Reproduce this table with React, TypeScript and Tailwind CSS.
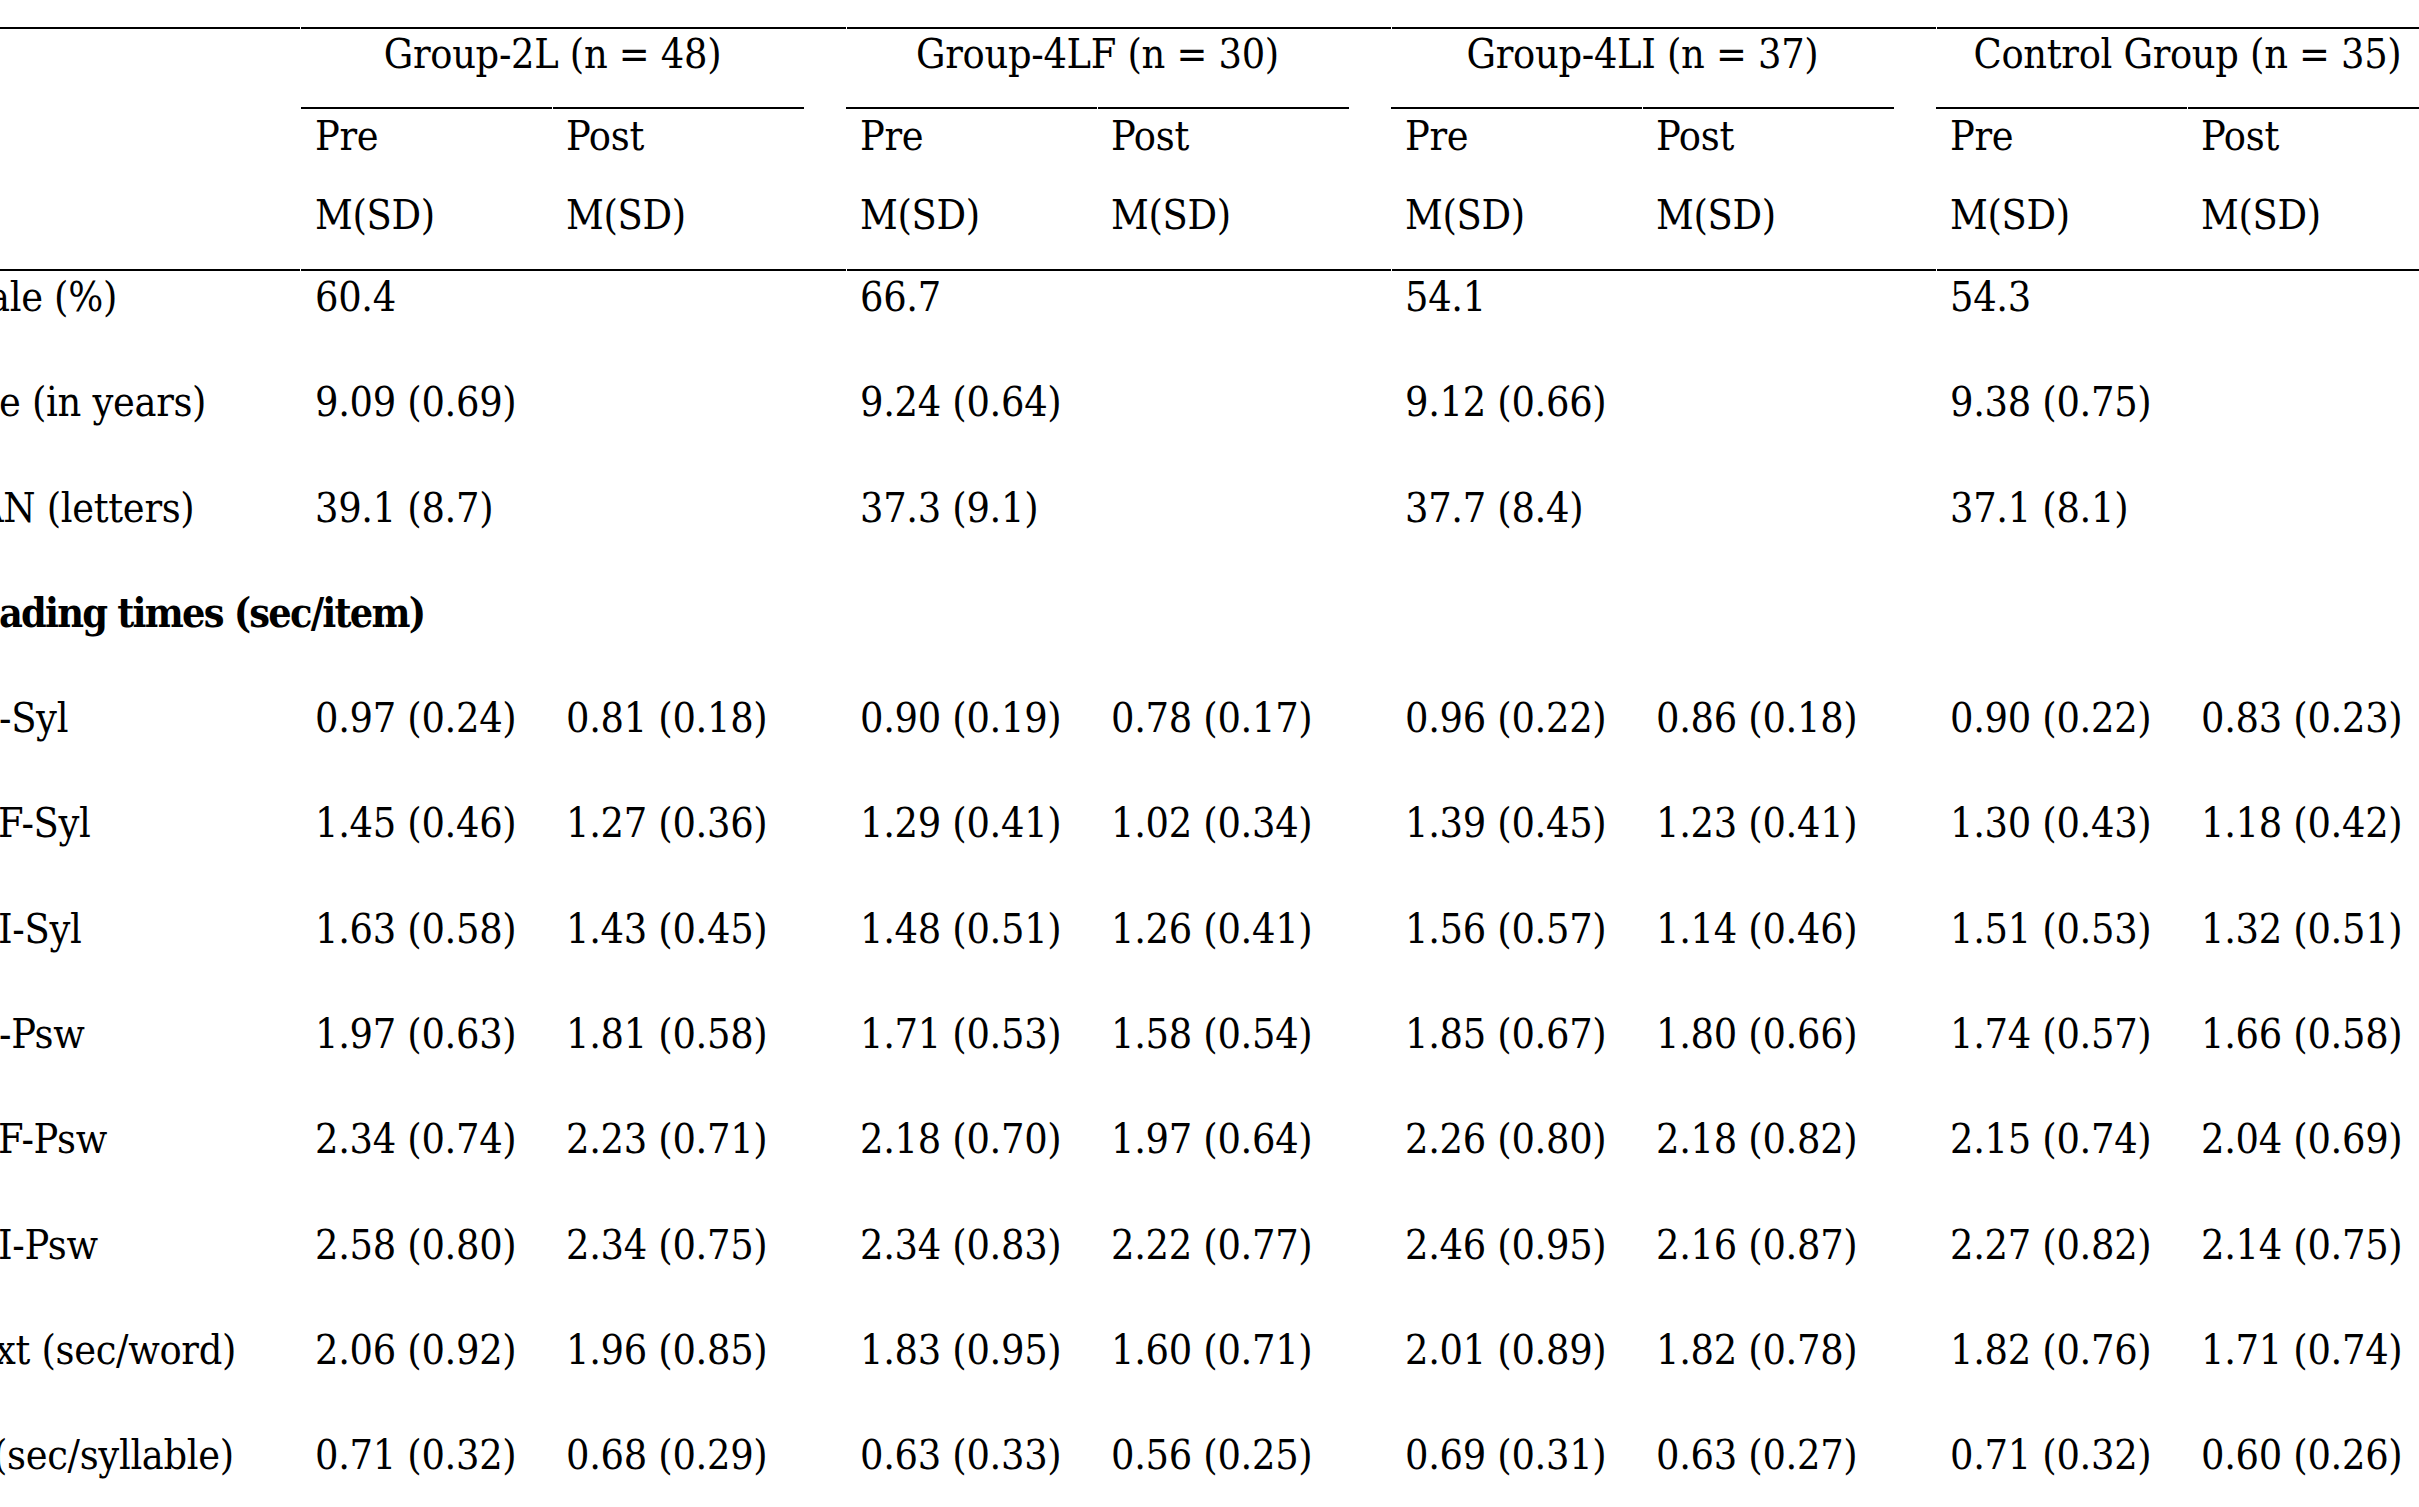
import React from "react";

type Row = { label: string; off: string; bold?: boolean; vals?: string[] };

const rows: Row[] = [
  { label: "ale (%)", off: "ml-[-12px]", vals: ["60.4", "", "66.7", "", "54.1", "", "54.3", ""] },
  { label: "e (in years)", off: "ml-[-1px]", vals: ["9.09 (0.69)", "", "9.24 (0.64)", "", "9.12 (0.66)", "", "9.38 (0.75)", ""] },
  { label: "AN (letters)", off: "ml-[-23px]", vals: ["39.1 (8.7)", "", "37.3 (9.1)", "", "37.7 (8.4)", "", "37.1 (8.1)", ""] },
  { label: "ading times (sec/item)", off: "ml-[-1px]", bold: true },
  { label: "-Syl", off: "ml-[-1px]", vals: ["0.97 (0.24)", "0.81 (0.18)", "0.90 (0.19)", "0.78 (0.17)", "0.96 (0.22)", "0.86 (0.18)", "0.90 (0.22)", "0.83 (0.23)"] },
  { label: "F-Syl", off: "ml-[-2px]", vals: ["1.45 (0.46)", "1.27 (0.36)", "1.29 (0.41)", "1.02 (0.34)", "1.39 (0.45)", "1.23 (0.41)", "1.30 (0.43)", "1.18 (0.42)"] },
  { label: "I-Syl", off: "ml-[-2px]", vals: ["1.63 (0.58)", "1.43 (0.45)", "1.48 (0.51)", "1.26 (0.41)", "1.56 (0.57)", "1.14 (0.46)", "1.51 (0.53)", "1.32 (0.51)"] },
  { label: "-Psw", off: "ml-[-1px]", vals: ["1.97 (0.63)", "1.81 (0.58)", "1.71 (0.53)", "1.58 (0.54)", "1.85 (0.67)", "1.80 (0.66)", "1.74 (0.57)", "1.66 (0.58)"] },
  { label: "F-Psw", off: "ml-[-2px]", vals: ["2.34 (0.74)", "2.23 (0.71)", "2.18 (0.70)", "1.97 (0.64)", "2.26 (0.80)", "2.18 (0.82)", "2.15 (0.74)", "2.04 (0.69)"] },
  { label: "I-Psw", off: "ml-[-2px]", vals: ["2.58 (0.80)", "2.34 (0.75)", "2.34 (0.83)", "2.22 (0.77)", "2.46 (0.95)", "2.16 (0.87)", "2.27 (0.82)", "2.14 (0.75)"] },
  { label: "xt (sec/word)", off: "ml-[-5px]", vals: ["2.06 (0.92)", "1.96 (0.85)", "1.83 (0.95)", "1.60 (0.71)", "2.01 (0.89)", "1.82 (0.78)", "1.82 (0.76)", "1.71 (0.74)"] },
  { label: "(sec/syllable)", off: "ml-[-7px]", vals: ["0.71 (0.32)", "0.68 (0.29)", "0.63 (0.33)", "0.56 (0.25)", "0.69 (0.31)", "0.63 (0.27)", "0.71 (0.32)", "0.60 (0.26)"] },
];

const groups = ["Group-2L (n = 48)", "Group-4LF (n = 30)", "Group-4LI (n = 37)", "Control Group (n = 35)"];

function Spacer() {
  return <div className="w-[42px] shrink-0" />;
}

function Rule() {
  return (
    <div className="flex h-[2px]">
      <div className="w-[300px] shrink-0 bg-black" />
      <div className="w-[1px] shrink-0" />
      <div className="w-[545px] shrink-0 bg-black" />
      <div className="w-[1px] shrink-0" />
      <div className="w-[544px] shrink-0 bg-black" />
      <div className="w-[1px] shrink-0" />
      <div className="w-[544px] shrink-0 bg-black" />
      <div className="w-[1px] shrink-0" />
      <div className="w-[544px] shrink-0 bg-black" />
    </div>
  );
}

export default function App() {
  return (
    <div className="w-[2419px] h-[1507px] overflow-hidden bg-white text-black font-['DejaVu_Serif_Condensed','DejaVu_Serif',serif] font-stretch-condensed text-[41px] leading-[48px] tracking-[-0.3px] pt-[27px]">
      <div className="w-[2440px]">
        <Rule />
        {/* header row 1 */}
        <div className="flex h-[80px]">
          <div className="w-[301px] shrink-0" />
          {groups.map((g, i) => (
            <React.Fragment key={g}>
              <div className="w-[503px] shrink-0 flex flex-col justify-between">
                <div className="pt-[1px] text-center whitespace-nowrap">{g}</div>
                <div className="flex gap-[1px]">
                  <div className="w-[251px] h-[2px] bg-black" />
                  <div className="w-[251px] h-[2px] bg-black" />
                </div>
              </div>
              {i < 3 && <Spacer />}
            </React.Fragment>
          ))}
        </div>
        {/* header row 2 */}
        <div className="flex h-[80px]">
          <div className="w-[301px] shrink-0" />
          {groups.map((g, i) => (
            <React.Fragment key={g}>
              <div className="w-[251px] shrink-0 pl-[14px] pt-[3px] whitespace-nowrap">Pre</div>
              <div className="w-[252px] shrink-0 pl-[14px] pt-[3px] whitespace-nowrap">Post</div>
              {i < 3 && <Spacer />}
            </React.Fragment>
          ))}
        </div>
        {/* header row 3 */}
        <div className="flex h-[80px]">
          <div className="w-[301px] shrink-0" />
          {groups.map((g, i) => (
            <React.Fragment key={g}>
              <div className="w-[251px] shrink-0 pl-[14px] pt-[2px] whitespace-nowrap">M(SD)</div>
              <div className="w-[252px] shrink-0 pl-[14px] pt-[2px] whitespace-nowrap">M(SD)</div>
              {i < 3 && <Spacer />}
            </React.Fragment>
          ))}
        </div>
        <Rule />
        {/* data rows */}
        {rows.map((r) => (
          <div key={r.label} className="flex h-[105.3px]">
            {r.bold ? (
              <div className="shrink-0 pt-[2px] whitespace-nowrap">
                <span className={`inline-block ${r.off} font-bold tracking-[-1.8px]`}>{r.label}</span>
              </div>
            ) : (
              <div className="w-[301px] shrink-0 overflow-hidden pt-[2px] whitespace-nowrap">
                <span className={`inline-block ${r.off}`}>{r.label}</span>
              </div>
            )}
            {r.vals &&
              [0, 1, 2, 3].map((gi) => (
                <React.Fragment key={gi}>
                  <div className="w-[251px] shrink-0 pl-[14px] pt-[2px] whitespace-nowrap">{r.vals![gi * 2]}</div>
                  <div className="w-[252px] shrink-0 pl-[14px] pt-[2px] whitespace-nowrap">{r.vals![gi * 2 + 1]}</div>
                  {gi < 3 && <Spacer />}
                </React.Fragment>
              ))}
          </div>
        ))}
      </div>
    </div>
  );
}
